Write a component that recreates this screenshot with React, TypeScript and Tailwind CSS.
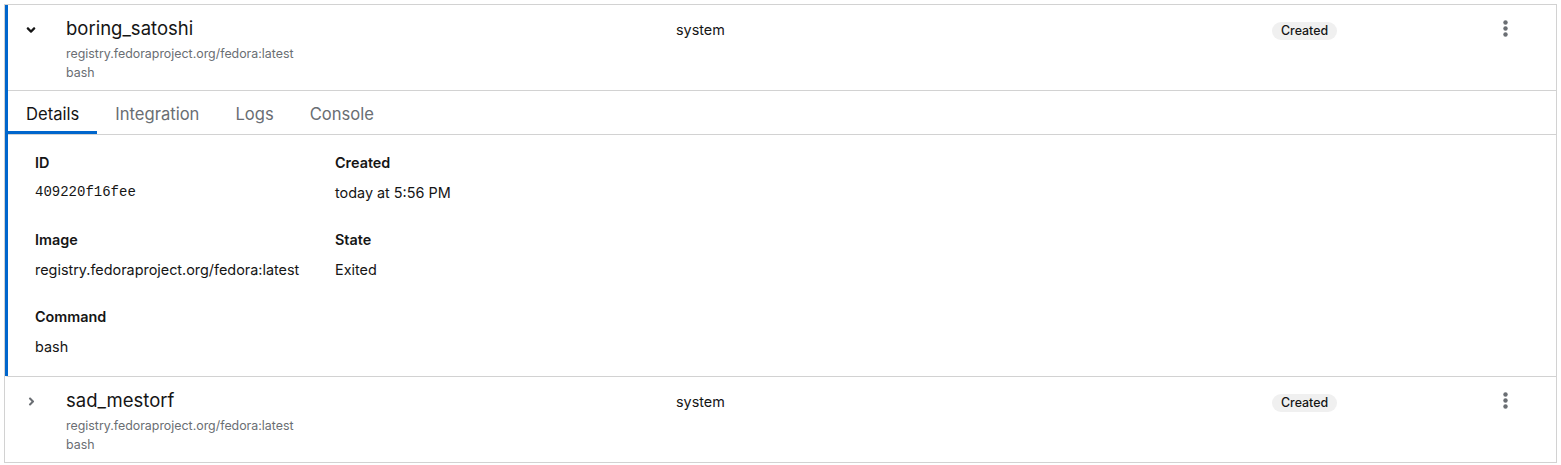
import React from "react";

const font = { fontFamily: 'Inter, "Liberation Sans", sans-serif' };

const ChevronDown = () => (
  <svg width="14" height="14" viewBox="0 0 320 512" className="fill-[#151515]">
    <path d="M143 352.3L7 216.3c-9.4-9.4-9.4-24.6 0-33.9l22.6-22.6c9.4-9.4 24.6-9.4 33.9 0l96.4 96.4 96.4-96.4c9.4-9.4 24.6-9.4 33.9 0l22.6 22.6c9.4 9.4 9.4 24.6 0 33.9l-136 136c-9.2 9.4-24.4 9.4-33.8 0z" />
  </svg>
);

const ChevronRight = () => (
  <svg width="13" height="13" viewBox="0 0 256 512" className="fill-[#6a6e73]">
    <path d="M224.3 273l-136 136c-9.4 9.4-24.6 9.4-33.9 0l-22.6-22.6c-9.4-9.4-9.4-24.6 0-33.9l96.4-96.4-96.4-96.4c-9.4-9.4-9.4-24.6 0-33.9L54.3 103c9.4-9.4 24.6-9.4 33.9 0l136 136c9.5 9.4 9.5 24.6.1 34z" />
  </svg>
);

const Kebab = () => (
  <svg width="5" height="17" viewBox="0 0 5 17" className="fill-[#6a6e73]">
    <circle cx="2.5" cy="2.5" r="2.2" />
    <circle cx="2.5" cy="8.5" r="2.2" />
    <circle cx="2.5" cy="14.5" r="2.2" />
  </svg>
);

interface RowProps {
  name: string;
  expanded?: boolean;
}

const ContainerRow = ({ name, expanded }: RowProps) => (
  <div className="flex h-[85px]">
    <div className="w-[58px] flex justify-center pt-[18px] pr-[12px]">
      {expanded ? <ChevronDown /> : <ChevronRight />}
    </div>
    <div className="w-[610px] pt-[11px]">
      <div className="text-[18.5px] leading-[24px] text-[#151515]">{name}</div>
      <div className="mt-[4px] text-[12.4px] leading-[19px] text-[#6a6e73]">
        registry.fedoraproject.org/fedora:latest
      </div>
      <div className="text-[12.4px] leading-[19px] text-[#6a6e73]">bash</div>
    </div>
    <div className="w-[596px] pt-[14px] text-[14.4px] leading-[21px] text-[#151515]">
      system
    </div>
    <div className="w-[231px] pt-[12px]">
      <span className="inline-block rounded-full bg-[#f0f0f0] px-[9px] text-[12.4px] leading-[18px] font-medium text-[#151515]">
        Created
      </span>
    </div>
    <div className="pt-[15px]">
      <Kebab />
    </div>
  </div>
);

const Field = ({ label, value, mono }: { label: string; value: string; mono?: boolean }) => (
  <div>
    <div className="text-[14.4px] leading-[21px] font-semibold text-[#151515]">{label}</div>
    <div
      className="mt-[9px] text-[14.4px] leading-[21px] text-[#151515]"
      style={mono ? { fontFamily: '"Liberation Mono", monospace', fontSize: 14 } : undefined}
    >
      {value}
    </div>
  </div>
);

export default function App() {
  const tabs = ["Details", "Integration", "Logs", "Console"];
  return (
    <div className="bg-white p-[4px] w-[1561px] h-[465px]" style={font}>
      <div className="border border-[#d2d2d2]">
        <div className="border-l-[3px] border-[#0066cc]">
          <ContainerRow name="boring_satoshi" expanded />
          <div className="border-t border-b border-[#d2d2d2] flex h-[45px]">
            {tabs.map((t, i) => (
              <div
                key={t}
                className={`px-[18px] flex items-center text-[16.6px] border-b-[3px] pt-[6px] ${
                  i === 0 ? "text-[#151515] border-[#0066cc]" : "text-[#6a6e73] border-transparent"
                }`}
              >
                {t}
              </div>
            ))}
          </div>
          <div className="grid grid-cols-[300px_300px] gap-y-[26px] pl-[27px] pt-[17px] pb-[19px]">
            <Field label="ID" value="409220f16fee" mono />
            <Field label="Created" value="today at 5:56 PM" />
            <Field label="Image" value="registry.fedoraproject.org/fedora:latest" />
            <Field label="State" value="Exited" />
            <Field label="Command" value="bash" />
          </div>
        </div>
        <div className="border-t border-[#d2d2d2] border-l-[3px] border-l-transparent">
          <ContainerRow name="sad_mestorf" />
        </div>
      </div>
    </div>
  );
}
